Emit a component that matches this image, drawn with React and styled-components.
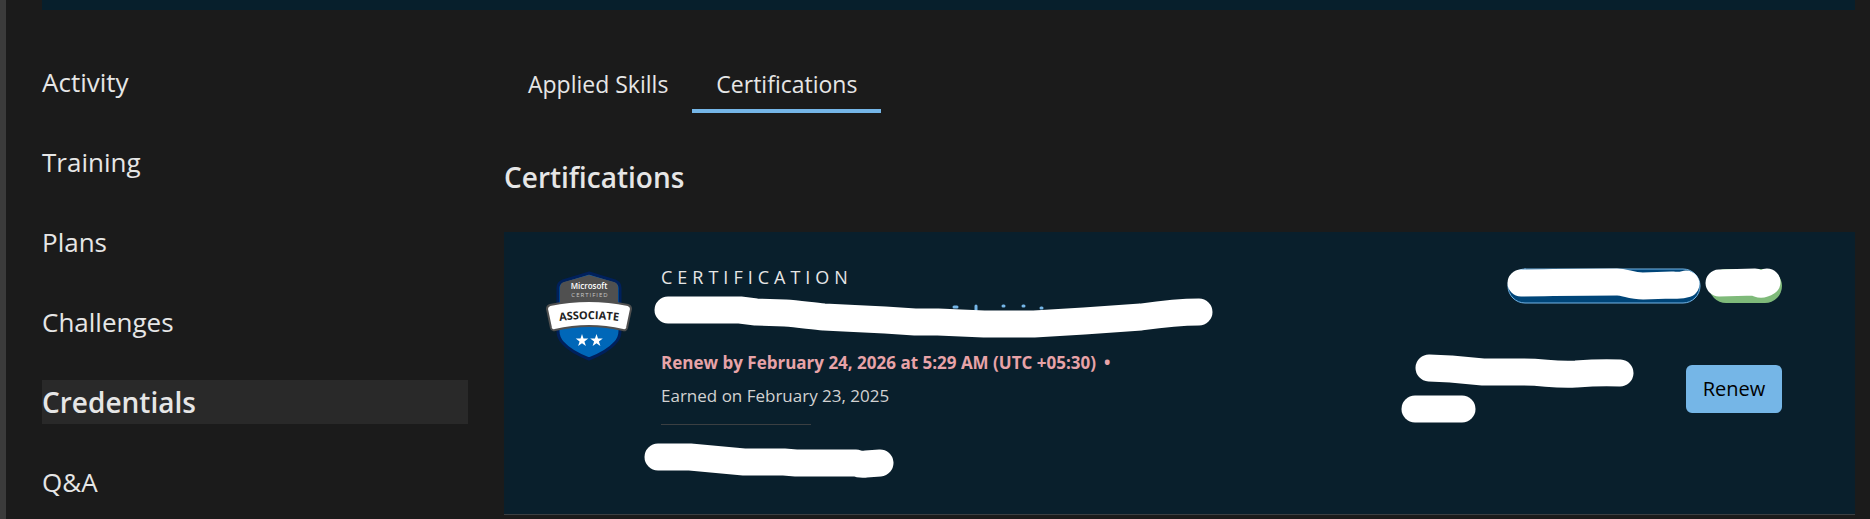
import React from "react";
import styled, { createGlobalStyle } from "styled-components";

const GlobalStyle = createGlobalStyle`
  *, *::before, *::after { box-sizing: border-box; }
  body {
    margin: 0;
    background: #1b1b1b;
    color: #e6e6e6;
    font-family: "Segoe UI", "Open Sans", "Noto Sans", sans-serif;
  }
`;

const Page = styled.div`
  min-height: 100vh;
  border-left: 6px solid #3b3b3b;
  padding: 0 15px 0 36px;
`;

const Banner = styled.div`
  height: 10px;
  background: #071f2c;
`;

const Columns = styled.div`
  display: flex;
  gap: 36px;
`;

const SideNav = styled.nav`
  flex: 0 0 426px;
  padding-top: 50px;
`;

const NavList = styled.ul`
  display: grid;
  gap: 36px;
  margin: 0;
  padding: 0;
  list-style: none;
`;

const NavLink = styled.a`
  display: block;
  font-size: ${(p) => (p.$current ? 28 : 26)}px;
  font-weight: ${(p) => (p.$current ? 600 : 400)};
  line-height: 44px;
  color: #e6e6e6;
  background: ${(p) => (p.$current ? "#292929" : "transparent")};
  text-decoration: none;
`;

const Main = styled.main`
  flex: 1;
  min-width: 0;
  padding-top: 48px;
`;

const Tabs = styled.div`
  display: flex;
`;

const Tab = styled.button`
  height: 55px;
  padding: 0 24px;
  border: 0;
  border-bottom: 4px solid ${(p) => (p.$selected ? "#75b6e7" : "transparent")};
  background: none;
  color: #e6e6e6;
  font: inherit;
  font-size: 23px;
  line-height: 50px;
`;

const Heading = styled.h2`
  margin: 44px 0 34px;
  font-size: 28px;
  font-weight: 600;
  line-height: 41px;
`;

const Card = styled.article`
  display: flex;
  align-items: flex-start;
  min-height: 283px;
  padding: 36px 73px 34px 42px;
  border-bottom: 1px solid #3b3f42;
  background: #091f2c;
`;

const BadgeImage = styled.svg`
  flex: none;
  width: 86px;
  height: 90px;
  margin: 3px 29px 0 0;
`;

const Details = styled.div`
  flex: 1;
  min-width: 0;
`;

const Kicker = styled.p`
  margin: 0;
  font-size: 18px;
  line-height: 18px;
  letter-spacing: 5px;
`;

const Redaction = styled.svg`
  display: block;
  flex: none;
  fill: none;
  stroke: #ffffff;
  stroke-width: 27px;
  stroke-linecap: round;
  stroke-linejoin: round;
`;

const TitleLink = styled.a`
  display: block;
  margin: 10px 0 8px -7px;
`;

const InfoLine = styled.p`
  margin: 0;
  font-size: 17px;
  line-height: 33px;
  font-weight: ${(p) => (p.$urgent ? 700 : 400)};
  color: ${(p) => (p.$urgent ? "#e8a3a8" : "#d2d2d2")};
`;

const Bullet = styled.span`
  margin-left: 8px;
`;

const Divider = styled.hr`
  width: 150px;
  height: 1px;
  margin: 12px 0 18px;
  border: 0;
  background: #3b3f42;
`;

const DetailsLink = styled.a`
  display: block;
  margin-left: -17px;
`;

const Side = styled.div`
  flex: none;
  display: flex;
  flex-direction: column;
  align-items: flex-end;
  gap: 50px;
`;

const Tags = styled.div`
  display: flex;
  gap: 4px;
`;

const Actions = styled.div`
  display: flex;
  align-items: center;
  gap: 52px;
`;

const Status = styled.div`
  display: grid;
  gap: 5px;
`;

const RenewButton = styled.button`
  width: 96px;
  height: 48px;
  border: 0;
  border-radius: 6px;
  background: #75b6e7;
  color: #000000;
  font: inherit;
  font-size: 20px;
  font-weight: 500;
`;

const NAV_ITEMS = ["Activity", "Training", "Plans", "Challenges", "Credentials", "Q&A"];

function AssociateBadge() {
  return (
    <BadgeImage viewBox="0 0 86 90" role="img" aria-label="Microsoft Certified Associate">
      <path
        d="M43 2 L69 10 Q74 12 74 17 V60 Q74 67 69 72 C62 80 53 84 43 88 C33 84 24 80 17 72 Q12 67 12 60 V17 Q12 12 17 10 Z"
        fill="#0067b8"
        stroke="#00205b"
        strokeWidth="3"
      />
      <path d="M43 4 L68 11 Q72 12 72 17 V40 H14 V17 Q14 12 18 11 Z" fill="#505050" />
      <path
        d="M4 34 Q43 26 82 34 Q85 35 85 38 L81 57 Q80 60 77 59 Q43 51 9 59 Q6 60 5 57 L1 38 Q1 35 4 34 Z"
        fill="#ffffff"
        stroke="#505050"
        strokeWidth="2"
      />
      <path id="ribbon-baseline" d="M6 51 Q43 45 80 51" fill="none" />
      <text x="43" y="18" textAnchor="middle" fontSize="8" fontWeight="600" fill="#ffffff">Microsoft</text>
      <text x="44" y="26" textAnchor="middle" fontSize="6" letterSpacing="1" fill="#c8c8c8">CERTIFIED</text>
      <text textAnchor="middle" fontSize="11" fontWeight="700" fill="#222222">
        <textPath href="#ribbon-baseline" startOffset="50%">ASSOCIATE</textPath>
      </text>
      <path
        d="M36 63 l1.500 4.500 h4.800 l-3.900 2.900 1.500 4.700 -3.900 -2.800 -3.900 2.800 1.500 -4.700 -3.900 -2.900 h4.800z M50.500 63 l1.500 4.500 h4.800 l-3.900 2.900 1.500 4.700 -3.900 -2.800 -3.900 2.800 1.500 -4.700 -3.900 -2.900 h4.800z"
        fill="#ffffff"
      />
    </BadgeImage>
  );
}

export default function App() {
  return (
    <>
      <GlobalStyle />
      <Page>
        <Banner />
        <Columns>
          <SideNav aria-label="Profile">
            <NavList>
              {NAV_ITEMS.map((name) => (
                <li key={name}>
                  <NavLink href="#" $current={name === "Credentials"}>{name}</NavLink>
                </li>
              ))}
            </NavList>
          </SideNav>
          <Main>
            <Tabs role="tablist">
              <Tab role="tab" aria-selected="false">Applied Skills</Tab>
              <Tab role="tab" aria-selected="true" $selected>Certifications</Tab>
            </Tabs>
            <Heading>Certifications</Heading>
            <Card>
              <AssociateBadge />
              <Details>
                <Kicker>CERTIFICATION</Kicker>
                <TitleLink href="#" aria-label="Certification name">
                  <Redaction width="562" height="42" viewBox="0 0 562 42">
                    <path
                      d="M300 11 h3 M322 10 v4 M349 10 h1 M369 10 h1 M387 12 h1"
                      style={{ stroke: "#75b6e7", strokeWidth: 3 }}
                    />
                    <path d="M14 14 H86 L102 16 L131 17 C145 18 158 20 170 21 L190 22 L231 24 L261 26 H284 L330 28 H380 L430 25 L487 21 Q522 16 545 16" />
                  </Redaction>
                </TitleLink>
                <InfoLine $urgent>
                  Renew by February 24, 2026 at 5:29 AM (UTC +05:30)<Bullet>•</Bullet>
                </InfoLine>
                <InfoLine>Earned on February 23, 2025</InfoLine>
                <Divider />
                <DetailsLink href="#" aria-label="Credential details">
                  <Redaction width="250" height="36" viewBox="0 0 250 36">
                    <path d="M14 14 H46 L100 19 H140 L152 20 H212 Q217 22 222 21 L236 20" />
                  </Redaction>
                </DetailsLink>
              </Details>
              <Side>
                <Tags>
                  <Redaction width="194" height="36" viewBox="0 0 194 36" role="img" aria-label="Tag">
                    <rect x="1" y="1" width="192" height="34" rx="17" style={{ fill: "#004578", stroke: "#75b6e7", strokeWidth: 1 }} />
                    <path d="M14 15 C40 15 60 14 110 14 C118 14 124 18 136 18 L165 17 Q173 18 179 16" />
                  </Redaction>
                  <Redaction width="77" height="36" viewBox="0 0 77 36" role="img" aria-label="Tag">
                    <rect x="4" y="1" width="73" height="34" rx="17" style={{ fill: "#7fba7a", stroke: "none" }} />
                    <path d="M14 15 L50 14 Q56 18 62 14" />
                  </Redaction>
                </Tags>
                <Actions>
                  <Status role="img" aria-label="Status">
                    <Redaction width="233" height="36" viewBox="0 0 233 36">
                      <path d="M28 14 L50 15 L82 18 H120 C145 18 150 21 175 20 Q200 18 219 19" />
                    </Redaction>
                    <Redaction width="76" height="28" viewBox="0 0 76 28">
                      <path d="M14 14 H61" />
                    </Redaction>
                  </Status>
                  <RenewButton>Renew</RenewButton>
                </Actions>
              </Side>
            </Card>
          </Main>
        </Columns>
      </Page>
    </>
  );
}
